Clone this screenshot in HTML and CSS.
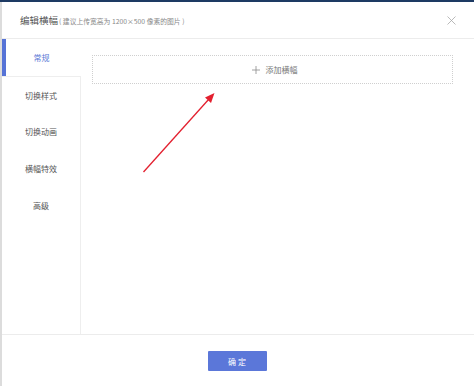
FILE: index.html
```html
<!DOCTYPE html>
<html lang="zh-CN">
<head>
  <meta charset="UTF-8">
  <title>编辑横幅</title>
  <link rel="stylesheet" href="styles.css">
</head>
<body>
  <div class="topbar"></div>
  <div class="dialog">
    <div class="header">
      <span class="title">编辑横幅</span>
      <span class="hint">( 建议上传宽高为 1200×500 像素的图片 )</span>
      <svg class="close" width="9" height="9" viewBox="0 0 9 9">
        <path d="M0.5 0.5 L8.5 8.5 M8.5 0.5 L0.5 8.5" stroke="#a8a8a8" stroke-width="0.8" fill="none"/>
      </svg>
    </div>

    <div class="main">
      <div class="sidebar">
        <div class="tab active">常规</div>
        <div class="tab-list">
          <div class="tab">切换样式</div>
          <div class="tab">切换动画</div>
          <div class="tab">横幅特效</div>
          <div class="tab">高级</div>
        </div>
      </div>
      <div class="content">
        <div class="add-box">
          <svg class="plus" width="8" height="8" viewBox="0 0 8 8">
            <path d="M4 0 V8 M0 4 H8" stroke="#8a8a8a" stroke-width="0.8" fill="none"/>
          </svg>
          <span>添加横幅</span>
        </div>
      </div>
    </div>

    <div class="footer">
      <button class="ok-btn">确定</button>
    </div>
  </div>

  <!-- annotation arrow drawn over the screenshot -->
  <svg class="arrow" width="474" height="386" viewBox="0 0 474 386">
    <line x1="143.5" y1="172" x2="209" y2="99" stroke="#e3202f" stroke-width="1.3"/>
    <path d="M214.5 93 L205 97.5 L211 103 Z" fill="#e3202f"/>
  </svg>
</body>
</html>
```

FILE: styles.css
```css
* {
  margin: 0;
  padding: 0;
  box-sizing: border-box;
}

body {
  width: 474px;
  height: 386px;
  overflow: hidden;
  background: #fff;
  font-family: "Noto Sans CJK SC", "Noto Sans", sans-serif;
  color: #333;
  display: flex;
  flex-direction: column;
}

.topbar {
  height: 2px;
  background: #1d3a63;
}

.dialog {
  flex: 1;
  display: flex;
  flex-direction: column;
  border-left: 2px solid #dcdcdc;
}

.header {
  height: 37px;
  border-bottom: 1px solid #ececec;
  display: flex;
  align-items: center;
  padding: 0 18px 0 18px;
}

.title {
  font-size: 9.5px;
  color: #555;
}

.hint {
  font-size: 6.8px;
  color: #888;
  margin-left: 1px;
  margin-top: 1px;
}

.close {
  margin-left: auto;
}

.main {
  flex: 1;
  display: flex;
}

.sidebar {
  width: 79px;
  display: flex;
  flex-direction: column;
}

.tab {
  height: 37px;
  display: flex;
  align-items: center;
  justify-content: center;
  font-size: 8px;
  color: #555;
}

.tab.active {
  color: #5a7ad6;
  border-left: 4px solid #5673d6;
  padding-right: 4px;
}

.tab-list {
  flex: 1;
  border-top: 1px solid #eeeeee;
  border-right: 1px solid #eeeeee;
}

.tab-list .tab:first-child {
  height: 36px;
}

.content {
  flex: 1;
  padding: 16px 21px 0 11px;
}

.add-box {
  height: 29px;
  border: 1px dotted #cfcfcf;
  display: flex;
  align-items: center;
  justify-content: center;
  gap: 6px;
  font-size: 8px;
  color: #777;
  padding-left: 4px;
}

.footer {
  height: 52px;
  border-top: 1px solid #ececec;
  display: flex;
  justify-content: center;
  padding-top: 16px;
  padding-right: 2px;
}

.ok-btn {
  width: 59px;
  height: 20px;
  border: none;
  border-radius: 1px;
  background: #5b77d9;
  color: #fff;
  font-family: "Noto Sans CJK SC", sans-serif;
  font-size: 8px;
  letter-spacing: 2px;
  padding-left: 2px;
}

.arrow {
  position: absolute;
  left: 0;
  top: 0;
  pointer-events: none;
}
```
